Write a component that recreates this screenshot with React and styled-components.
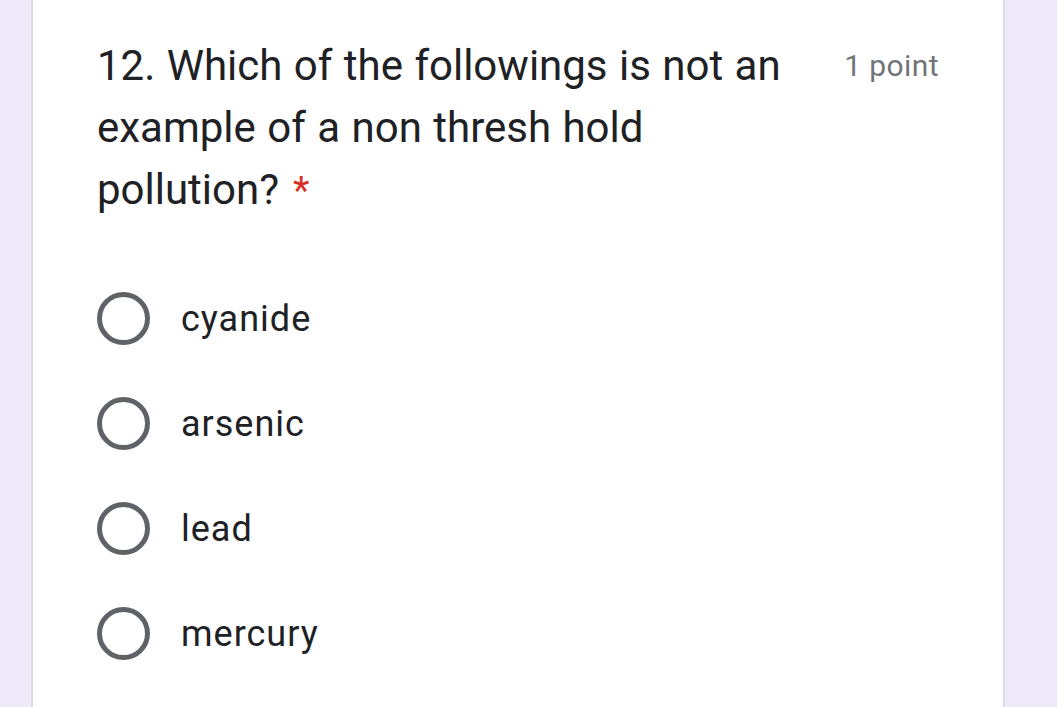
import React from "react";
import styled, { createGlobalStyle } from "styled-components";

const Global = createGlobalStyle`
  html, body { margin: 0; padding: 0; background: #eee9f8; }
  body { font-family: Roboto, "Noto Sans", Arial, sans-serif; }
`;

const Page = styled.div`
  min-height: 707px;
  padding: 0 52px 0 31px;
  display: flex;
  align-items: stretch;
`;

const Card = styled.div`
  flex: 1;
  min-height: 707px;
  background: #fff;
  border-left: 2px solid #dadce0;
  border-right: 2px solid #dadce0;
  padding: 35px 64px 0 64px;
  box-sizing: border-box;
`;

const Header = styled.div`
  display: flex;
  justify-content: space-between;
  align-items: flex-start;
`;

const Title = styled.div`
  font-size: 42px;
  line-height: 62px;
  color: #202124;
  width: 700px;
  word-spacing: 1px;
`;

const Star = styled.span`
  color: #d93025;
  margin-left: 14px;
  font-size: 38px;
`;

const Points = styled.div`
  font-size: 30px;
  line-height: 62px;
  color: #70757a;
  white-space: nowrap;
  letter-spacing: 0.4px;
`;

const Options = styled.div`
  margin-top: 70px;
  display: flex;
  flex-direction: column;
  gap: 52px;
`;

const Option = styled.label`
  display: flex;
  align-items: center;
  height: 53px;
`;

const Radio = styled.span`
  width: 53px;
  height: 53px;
  box-sizing: border-box;
  border: 5px solid #5f6368;
  border-radius: 50%;
  flex-shrink: 0;
`;

const Label = styled.span`
  margin-left: 31px;
  font-size: 36px;
  color: #202124;
  letter-spacing: 1px;
`;

const opts = ["cyanide", "arsenic", "lead", "mercury"];

export default function App() {
  return (
    <>
      <Global />
      <Page>
        <Card>
          <Header>
            <Title>
              12. Which of the followings is not an example of a non thresh hold
              pollution?<Star>*</Star>
            </Title>
            <Points>1 point</Points>
          </Header>
          <Options>
            {opts.map((o) => (
              <Option key={o}>
                <Radio />
                <Label>{o}</Label>
              </Option>
            ))}
          </Options>
        </Card>
      </Page>
    </>
  );
}
